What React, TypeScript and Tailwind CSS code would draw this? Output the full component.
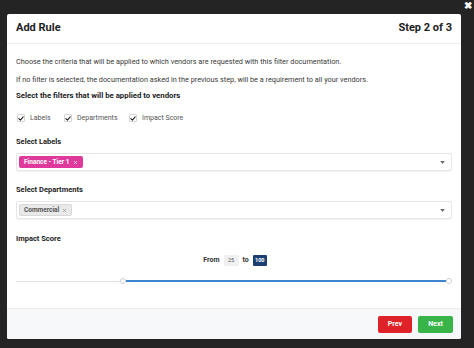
import { X } from 'lucide-react';

const filters = ['Labels', 'Departments', 'Impact Score'];

function Check() {
  return (
    <span className="flex h-[8px] w-[8px] items-center justify-center rounded-[1px] border border-[#d5d5d5] bg-white">
      <svg viewBox="0 0 10 10" className="h-[7px] w-[7px]">
        <path d="M1.5 5.2 L4 7.6 L8.6 2.2" fill="none" stroke="#222" strokeWidth="1.8" strokeLinecap="round" strokeLinejoin="round" />
      </svg>
    </span>
  );
}

function Caret() {
  return (
    <svg viewBox="0 0 6 4" className="h-[3px] w-[5px]">
      <path d="M0 0 L6 0 L3 4 Z" fill="#666" />
    </svg>
  );
}

export default function App() {
  return (
    <div className="relative h-[348px] w-[474px] bg-[#242424] pl-[7px] pt-[14px] font-['Roboto',sans-serif]">
      {/* close */}
      <div className="absolute right-[2px] top-[0px] text-[10px] font-bold leading-[12px] text-white">✖</div>

      <div className="flex h-[325px] w-[454px] flex-col rounded-[2px] bg-white">
        {/* header */}
        <div className="flex h-[30px] items-center justify-between border-b border-[#ececec] px-[9px] text-[11px] font-bold text-[#222]">
          <span>Add Rule</span>
          <span>Step 2 of 3</span>
        </div>

        {/* body */}
        <div className="flex flex-1 flex-col px-[9px] text-[#333]">
          <p className="mt-[13px] text-[7.3px] leading-[10px] text-[#3a3a3a]">
            Choose the criteria that will be applied to which vendors are requested with this filter documentation.
          </p>
          <p className="mt-[8px] text-[7.3px] leading-[10px] text-[#3a3a3a]">
            If no filter is selected, the documentation asked in the previous step, will be a requirement to all your vendors.
          </p>
          <p className="mt-[6px] text-[7.8px] font-bold leading-[10px] text-[#222]">
            Select the filters that will be applied to vendors
          </p>

          <div className="mt-[12px] flex h-[10px] items-center text-[7px] text-[#555]">
            {filters.map((f, i) => (
              <label key={f} className={`flex items-center gap-[5px] ${i === 0 ? 'ml-[1px] w-[47px]' : i === 1 ? 'w-[65px]' : ''}`}>
                <Check />
                <span>{f}</span>
              </label>
            ))}
          </div>

          <p className="mt-[14px] text-[7.5px] font-bold leading-[10px] text-[#222]">Select Labels</p>
          <div className="mt-[6px] flex h-[18px] items-center justify-between rounded-[2px] border border-[#e6e6e6] pl-[2px] pr-[6px] shadow-[0_1px_1px_rgba(0,0,0,0.05)]">
            <span className="flex h-[12px] items-center gap-[3px] rounded-[2px] bg-[#e0399c] px-[5px] text-[6.5px] font-bold leading-none text-white">
              Finance - Tier 1
              <X className="h-[5px] w-[5px]" strokeWidth={3} />
            </span>
            <Caret />
          </div>

          <p className="mt-[14px] text-[7.5px] font-bold leading-[10px] text-[#222]">Select Departments</p>
          <div className="mt-[6px] flex h-[18px] items-center justify-between rounded-[2px] border border-[#e6e6e6] pl-[2px] pr-[6px] shadow-[0_1px_1px_rgba(0,0,0,0.05)]">
            <span className="flex h-[12px] items-center gap-[3px] rounded-[2px] border border-[#d8d8d8] bg-[#e9e9e9] px-[4px] text-[6.5px] font-bold leading-none text-[#555]">
              Commercial
              <X className="h-[5px] w-[5px] text-[#888]" strokeWidth={3} />
            </span>
            <Caret />
          </div>

          <p className="mt-[15px] text-[7.5px] font-bold leading-[10px] text-[#222]">Impact Score</p>

          <div className="mt-[11px] flex h-[11px] items-center justify-center gap-[4px] pl-[2px] text-[7px] font-bold leading-none text-[#333]">
            <span>From</span>
            <span className="flex h-[11px] w-[15px] items-center justify-center rounded-[1px] bg-[#f0f0f0] text-[5.5px] font-normal text-[#555]">25</span>
            <span>to</span>
            <span className="flex h-[11px] w-[14px] items-center justify-center rounded-[1px] bg-[#1c3f72] text-[5.5px] text-white">100</span>
          </div>

          {/* slider */}
          <div className="mt-[11px] flex h-[8px] items-center">
            <div className="h-[1px] w-[104px] bg-[#e2e2e2]" />
            <div className="h-[6px] w-[6px] shrink-0 rounded-full border border-[#cfcfcf] bg-white" />
            <div className="h-[2px] flex-1 bg-[#3d86cf]" />
            <div className="h-[6px] w-[6px] shrink-0 rounded-full border border-[#cfcfcf] bg-white" />
          </div>
        </div>

        {/* footer */}
        <div className="flex h-[31px] items-center justify-end gap-[6px] rounded-b-[2px] border-t border-[#ededed] bg-[#f7f8fa] pr-[8px]">
          <button className="flex h-[17px] w-[34px] items-center justify-center rounded-[2px] bg-[#de2228] text-[7px] font-bold text-white">
            Prev
          </button>
          <button className="flex h-[17px] w-[35px] items-center justify-center rounded-[2px] bg-[#38b449] text-[7px] font-bold text-white">
            Next
          </button>
        </div>
      </div>
    </div>
  );
}
